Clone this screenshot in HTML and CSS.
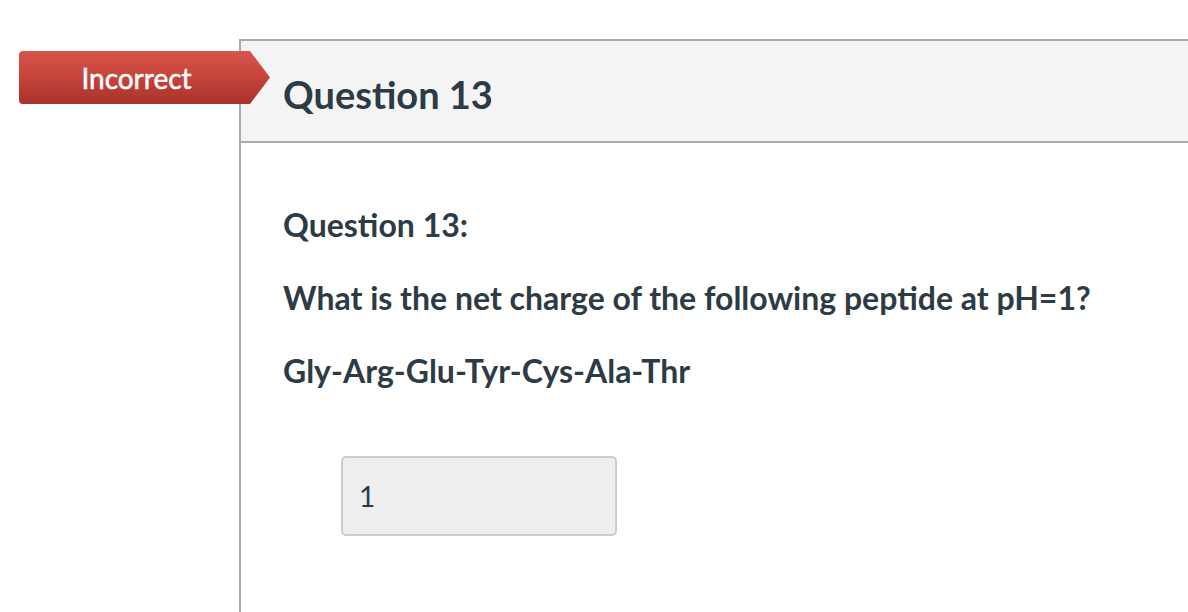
FILE: index.html
```html
<!DOCTYPE html>
<html lang="en">
<head>
<meta charset="utf-8">
<title>Question 13</title>
<link rel="stylesheet" href="styles.css">
</head>
<body>
<div class="page">
  <div class="gutter">
    <div class="badge">Incorrect</div>
  </div>
  <section class="card">
    <header class="card-header">
      <h2 class="card-title">Question 13</h2>
    </header>
    <div class="card-body">
      <p class="q-line">Question 13:</p>
      <p class="q-line">What is the net charge of the following peptide at pH=1?</p>
      <p class="q-line">Gly-Arg-Glu-Tyr-Cys-Ala-Thr</p>
      <div class="answer">
        <input class="answer-input" type="text" value="1" readonly>
      </div>
    </div>
  </section>
</div>
</body>
</html>
```

FILE: styles.css
```css
html, body {
  margin: 0;
  padding: 0;
  background: #ffffff;
  overflow: hidden;
}

body {
  font-family: Lato, "Open Sans", "Liberation Sans", sans-serif;
  color: #2d3b45;
  height: 612px;
}

.page {
  display: flex;
  padding-top: 39px;
  height: 612px;
  box-sizing: border-box;
  position: relative;
}

.gutter {
  flex: none;
  width: 239px;
  position: relative;
}

.badge {
  position: absolute;
  left: 19px;
  top: 12px;
  width: 251px;
  height: 53px;
  box-sizing: border-box;
  padding-right: 20px;
  padding-left: 4px;
  display: flex;
  align-items: center;
  justify-content: center;
  background: linear-gradient(to bottom, #d6554c 0%, #c64339 50%, #a8322b 100%);
  border-radius: 4px 0 0 4px;
  clip-path: polygon(0 0, 231px 0, 251px 50%, 231px 100%, 0 100%);
  color: #ffffff;
  font-size: 28px;
  font-weight: 400;
  -webkit-text-stroke: 0.5px #ffffff;
  line-height: 1;
  padding-top: 1px;
  z-index: 2;
}

.card {
  flex: 1;
  min-width: 0;
  border-left: 2px solid #aaaaaa;
  border-top: 2px solid #aaaaaa;
}

.card-header {
  height: 102px;
  box-sizing: border-box;
  background: #f4f4f4;
  border-bottom: 2px solid #aaaaaa;
  padding: 31px 0 0 42px;
}

.card-title {
  margin: 0;
  font-size: 38px;
  font-weight: 700;
  line-height: 1.2;
}

.card-body {
  padding: 63px 0 0 42px;
}

.q-line {
  margin: 0 0 35px 0;
  font-size: 32px;
  font-weight: 700;
  line-height: 38px;
}

.answer {
  padding: 31px 0 0 58px;
}

.answer-input {
  display: block;
  width: 276px;
  height: 80px;
  box-sizing: border-box;
  margin: 0;
  padding: 0 0 0 16px;
  background: #eeeeee;
  border: 2px solid #cccccc;
  border-radius: 5px;
  font-family: Lato, "Open Sans", "Liberation Sans", sans-serif;
  font-size: 28px;
  color: #2d3b45;
  outline: none;
}
```
